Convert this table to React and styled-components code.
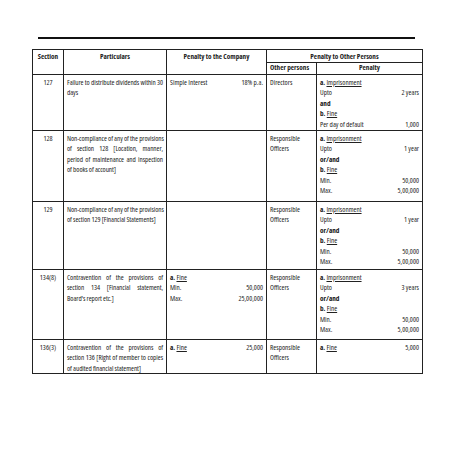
import React from "react";
import styled, { createGlobalStyle } from "styled-components";

const GlobalStyle = createGlobalStyle`
  html, body {
    margin: 0;
    padding: 0;
    background: #fff;
  }
  body {
    font-family: "Open Sans", "DejaVu Sans Condensed", sans-serif;
    font-stretch: 75%;
    color: #222;
  }
`;

const rows = [
  {
    section: "127",
    height: 56,
    particulars: ["Failure to distribute dividends within 30", "days"],
    company: [{ left: "Simple Interest", right: "18% p.a." }],
    persons: ["Directors"],
    penalty: [
      { head: "a.", link: "Imprisonment" },
      { left: "Upto", right: "2 years" },
      { bold: "and" },
      { head: "b.", link: "Fine" },
      { left: "Per day of default", right: "1,000" },
    ],
  },
  {
    section: "128",
    height: 71,
    particulars: [
      "Non-compliance of any of the provisions",
      "of section 128 [Location, manner,",
      "period of maintenance and inspection",
      "of books of account]",
    ],
    company: [],
    persons: ["Responsible", "Officers"],
    penalty: [
      { head: "a.", link: "Imprisonment" },
      { left: "Upto", right: "1 year" },
      { bold: "or/and" },
      { head: "b.", link: "Fine" },
      { left: "Min.", right: "50,000" },
      { left: "Max.", right: "5,00,000" },
    ],
  },
  {
    section: "129",
    height: 68,
    particulars: [
      "Non-compliance of any of the provisions",
      "of section 129 [Financial Statements]",
    ],
    company: [],
    persons: ["Responsible", "Officers"],
    penalty: [
      { head: "a.", link: "Imprisonment" },
      { left: "Upto", right: "1 year" },
      { bold: "or/and" },
      { head: "b.", link: "Fine" },
      { left: "Min.", right: "50,000" },
      { left: "Max.", right: "5,00,000" },
    ],
  },
  {
    section: "134(8)",
    height: 70,
    particulars: [
      "Contravention of the provisions of",
      "section 134 [Financial statement,",
      "Board's report etc.]",
    ],
    company: [
      { head: "a.", link: "Fine" },
      { left: "Min.", right: "50,000" },
      { left: "Max.", right: "25,00,000" },
    ],
    persons: ["Responsible", "Officers"],
    penalty: [
      { head: "a.", link: "Imprisonment" },
      { left: "Upto", right: "3 years" },
      { bold: "or/and" },
      { head: "b.", link: "Fine" },
      { left: "Min.", right: "50,000" },
      { left: "Max.", right: "5,00,000" },
    ],
  },
  {
    section: "136(3)",
    height: 34,
    particulars: [
      "Contravention of the provisions of",
      "section 136 [Right of member to copies",
      "of audited financial statement]",
    ],
    company: [{ head: "a.", link: "Fine", right: "25,000" }],
    persons: ["Responsible", "Officers"],
    penalty: [{ head: "a.", link: "Fine", right: "5,000" }],
  },
];

function Entry({ item }) {
  if (item.bold) {
    return (
      <Line>
        <Bold>{item.bold}</Bold>
      </Line>
    );
  }
  return (
    <Line>
      <span>
        {item.head && <Bold>{item.head} </Bold>}
        {item.link && <Under>{item.link}</Under>}
        {item.left}
      </span>
      {item.right && <span>{item.right}</span>}
    </Line>
  );
}

export default function App() {
  return (
    <Page>
      <GlobalStyle />
      <Rule />
      <Table>
        <colgroup>
          <col style={{ width: 31 }} />
          <col style={{ width: 103 }} />
          <col style={{ width: 100 }} />
          <col style={{ width: 50 }} />
          <col style={{ width: 106 }} />
        </colgroup>
        <thead>
          <HeadRow $h={13}>
            <Th rowSpan={2}>Section</Th>
            <Th rowSpan={2}>Particulars</Th>
            <Th rowSpan={2}>Penalty to the Company</Th>
            <Th colSpan={2}>Penalty to Other Persons</Th>
          </HeadRow>
          <HeadRow $h={12}>
            <Th $left $tight>Other persons</Th>
            <Th $tight>Penalty</Th>
          </HeadRow>
        </thead>
        <tbody>
          {rows.map((r) => (
            <BodyRow key={r.section} $h={r.height}>
              <Td $center>{r.section}</Td>
              <Td>
                {r.particulars.map((t, i) => (
                  <Justified key={i} $last={i === r.particulars.length - 1}>
                    {t}
                  </Justified>
                ))}
              </Td>
              <Td>
                {r.company.map((c, i) => (
                  <Entry key={i} item={c} />
                ))}
              </Td>
              <Td>
                {r.persons.map((p, i) => (
                  <Line key={i}>{p}</Line>
                ))}
              </Td>
              <Td>
                {r.penalty.map((p, i) => (
                  <Entry key={i} item={p} />
                ))}
              </Td>
            </BodyRow>
          ))}
        </tbody>
      </Table>
    </Page>
  );
}

const Page = styled.div`
  width: 453px;
  height: 453px;
  box-sizing: border-box;
  padding: 37px 0 0 32px;
  font-size: 7.2px;
`;

const Rule = styled.div`
  width: 377px;
  height: 2px;
  margin-left: 6px;
  margin-bottom: 10px;
  background: #111;
`;

const Table = styled.table`
  width: 390px;
  table-layout: fixed;
  border-collapse: collapse;
  border: 1px solid #222;
`;

const HeadRow = styled.tr`
  height: ${(p) => p.$h}px;
`;

const BodyRow = styled.tr`
  height: ${(p) => p.$h}px;
`;

const Th = styled.th`
  border: 1px solid #222;
  padding: ${(p) => (p.$tight ? "0 3px" : "2px 3px 0")};
  vertical-align: top;
  text-align: ${(p) => (p.$left ? "left" : "center")};
  font-weight: bold;
  line-height: 8px;
  color: #1a1a1a;
  white-space: nowrap;
  overflow: hidden;
`;

const Td = styled.td`
  border: 1px solid #222;
  padding: 2px 3px 0;
  vertical-align: top;
  text-align: ${(p) => (p.$center ? "center" : "left")};
  line-height: 10.4px;
  overflow: hidden;
`;

const Justified = styled.div`
  text-align: justify;
  text-align-last: ${(p) => (p.$last ? "left" : "justify")};
  letter-spacing: -0.07px;
  white-space: nowrap;
`;

const Line = styled.div`
  display: flex;
  justify-content: space-between;
  white-space: nowrap;
`;

const Bold = styled.b`
  font-weight: bold;
  color: #111;
`;

const Under = styled.span`
  text-decoration: underline;
`;
